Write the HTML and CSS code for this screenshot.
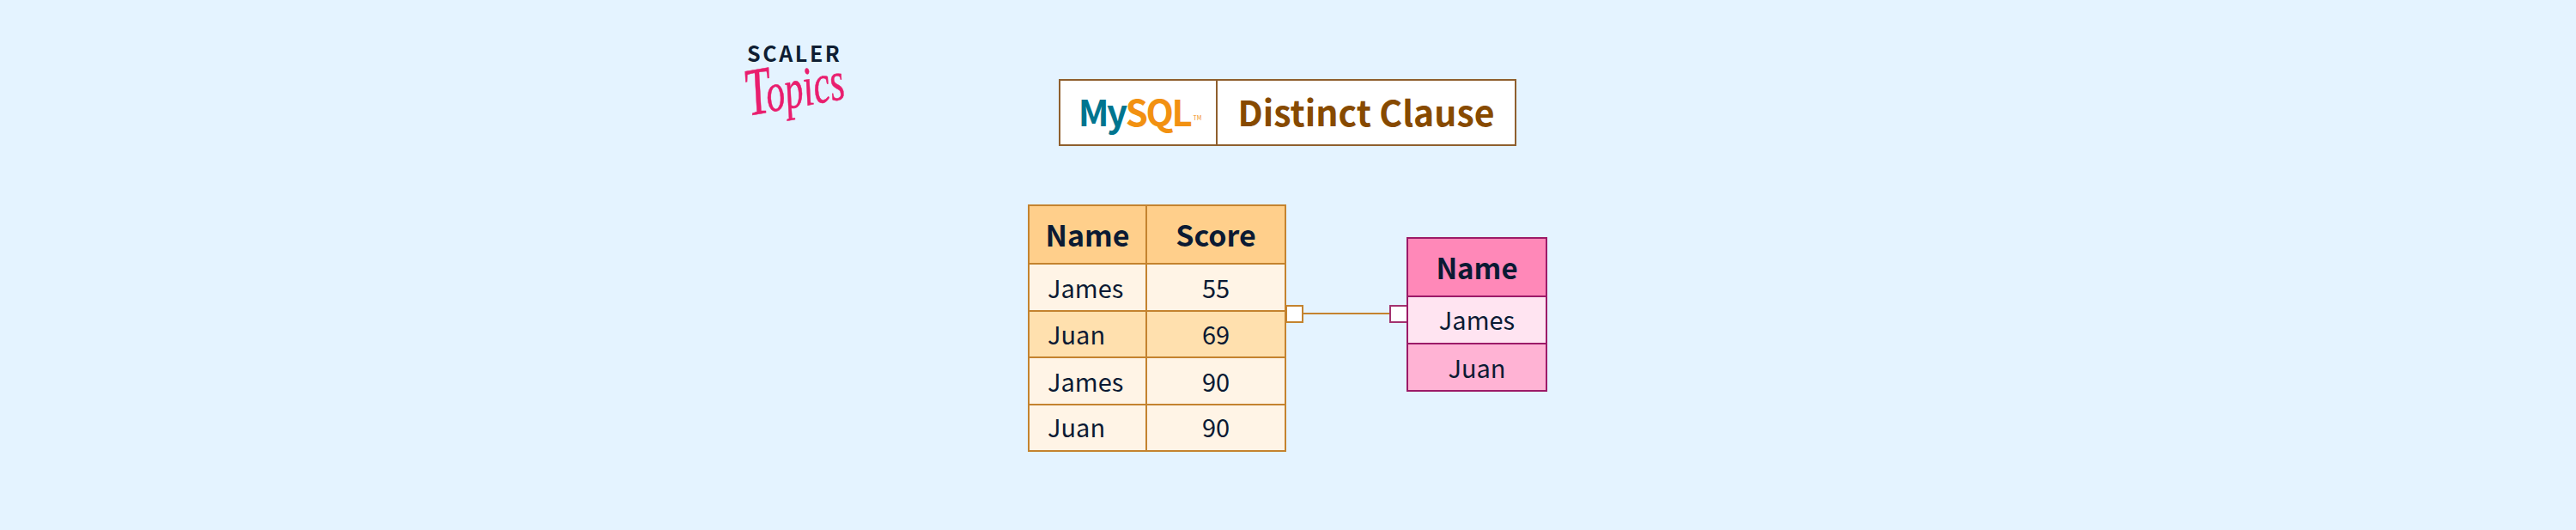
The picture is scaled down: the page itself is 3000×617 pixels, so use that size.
FILE: index.html
```html
<!DOCTYPE html>
<html lang="en">
<head>
<meta charset="utf-8">
<title>MySQL Distinct Clause</title>
<link rel="stylesheet" href="styles.css">
</head>
<body>
<main class="page">
  <header class="top">
    <div class="logo">
      <span class="logo-scaler">SCALER</span>
      <span class="logo-topics"><span class="logo-t">T</span>opics</span>
    </div>
    <div class="title-box">
      <div class="title-logo"><span class="my">My</span><span class="sql">SQL</span><span class="tm">TM</span></div>
      <h1 class="title-text">Distinct Clause</h1>
    </div>
  </header>
  <section class="diagram">
    <table class="tbl tbl-source">
      <thead><tr><th class="col-name">Name</th><th class="col-score">Score</th></tr></thead>
      <tbody>
        <tr><td class="left">James</td><td>55</td></tr>
        <tr class="alt"><td class="left">Juan</td><td>69</td></tr>
        <tr><td class="left">James</td><td>90</td></tr>
        <tr class="last"><td class="left">Juan</td><td>90</td></tr>
      </tbody>
    </table>
    <div class="connector">
      <span class="port port-source"></span>
      <span class="wire"></span>
      <span class="port port-result"></span>
    </div>
    <table class="tbl tbl-result">
      <thead><tr><th>Name</th></tr></thead>
      <tbody>
        <tr><td>James</td></tr>
        <tr class="alt"><td>Juan</td></tr>
      </tbody>
    </table>
  </section>
</main>
</body>
</html>
```
FILE: styles.css
```css
* { box-sizing: border-box; }
html, body { margin: 0; padding: 0; }
body {
  width: 3000px;
  height: 617px;
  overflow: hidden;
  background: #e4f3ff;
  font-family: "Noto Sans CJK SC", "Noto Sans", sans-serif;
  color: #0b1a33;
}
.page { display: flex; flex-direction: column; }
.top { display: flex; align-items: flex-start; height: 238px; padding-left: 867px; }
.logo { width: 125px; flex: none; margin-top: 46px; display: flex; flex-direction: column; }
.logo-scaler {
  font-size: 25px; line-height: 30px; font-weight: 700; letter-spacing: 2.6px;
  color: #0f1e33; padding-left: 3px;
}
.logo-topics {
  font-family: "Liberation Serif", serif; font-style: italic;
  font-size: 46px; line-height: 50px; color: #e91e6e;
  -webkit-text-stroke: 0.4px #e91e6e;
  letter-spacing: 0; transform: rotate(-10deg) scale(0.95, 1.4); transform-origin: left center;
  margin-top: 13px; margin-left: 1px; white-space: nowrap;
}
.logo-t { font-size: 56px; line-height: 40px; margin-right: -6px; }
.title-box {
  margin-top: 92px; margin-left: 241px; width: 533px; height: 78px; flex: none;
  display: flex; background: #fff; border: 2px solid #8f5f2e;
}
.title-logo {
  width: 183px; flex: none; border-right: 2px solid #8f5f2e;
  display: flex; align-items: center; justify-content: center;
  font-size: 42px; font-weight: 700; letter-spacing: -2.4px; padding: 0 0 6px 4px;
}
.my { color: #00758f; }
.sql { color: #f29111; }
.tm { color: #f29111; font-size: 7px; font-weight: 400; align-self: flex-end; margin: 0 0 20px 3px; letter-spacing: 0; }
.title-text {
  flex: 1; margin: 0; text-align: center; font-size: 41px; line-height: 70px;
  font-weight: 700; color: #874a00;
}
.diagram { display: flex; align-items: flex-start; padding-left: 1197px; }
.tbl { border-collapse: collapse; table-layout: fixed; text-align: center; }
.tbl th, .tbl td { padding: 0; font-weight: 400; font-size: 29px; line-height: 1; }
.tbl th { font-weight: 700; font-size: 34px; }
.tbl-source { width: 301px; height: 286px; }
.tbl-source th, .tbl-source td { border: 2px solid #c4832f; }
.tbl-source th { background: #ffcf8b; height: 68px; }
.tbl-source td { background: #fff4e6; height: 54.5px; }
.tbl-source .alt td { background: #ffe0ae; }
.tbl-source .last td { padding-bottom: 2px; }
.col-name { width: 137px; }
.tbl-source .left { text-align: left; padding-left: 21px; }
.connector { width: 141px; height: 20px; margin-top: 117px; display: flex; align-items: center; margin-left: -1px; position: relative; z-index: 1; }
.port { width: 21px; height: 21px; background: #fff; border: 2px solid; flex: none; }
.port-source { border-color: #c4832f; }
.port-result { width: 20px; border-color: #a3326f; border-right: 0; }
.wire { flex: 1; height: 2px; background: #c4832f; }
.tbl-result { width: 164px; height: 178px; margin-top: 38px; }
.tbl-result th, .tbl-result td { border: 2px solid #9c1a68; }
.tbl-result th { background: #ff88b8; height: 68px; font-size: 33px; }
.tbl-result td { background: #ffe4f1; height: 55px; padding-bottom: 2px; }
.tbl-result .alt td { background: #ffb3d4; padding-bottom: 0; }
```
